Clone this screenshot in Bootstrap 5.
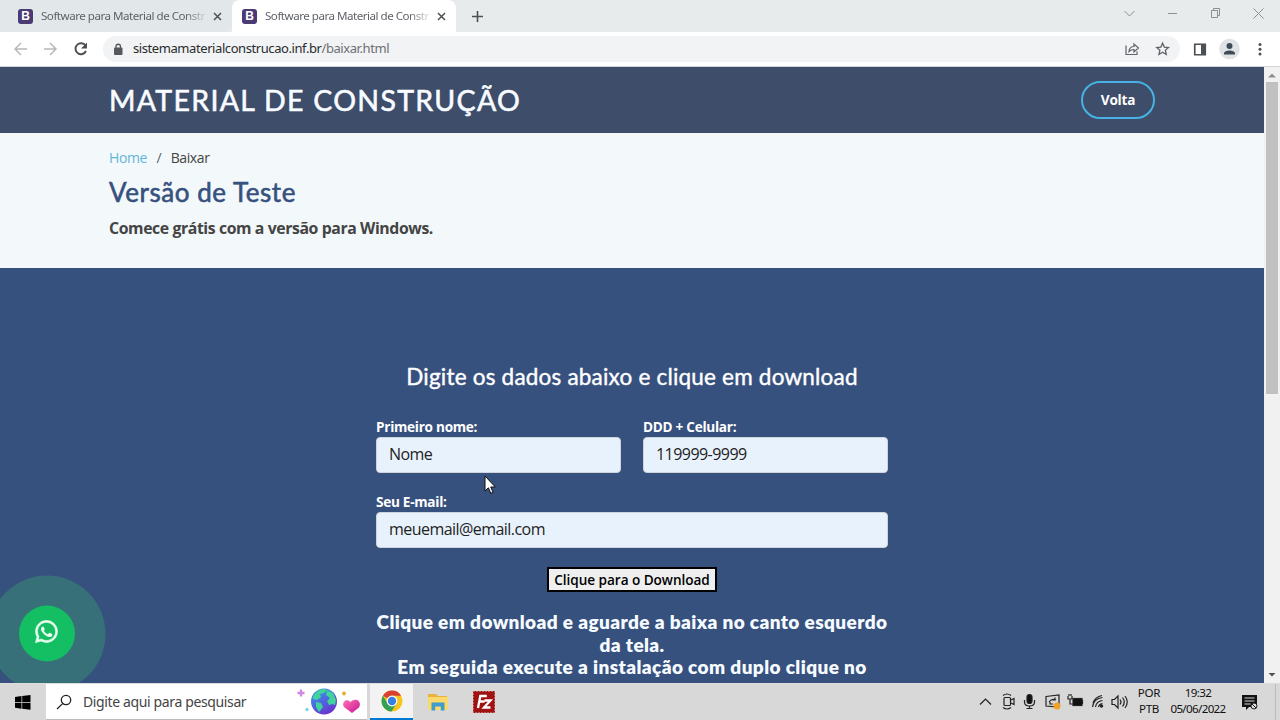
<!DOCTYPE html>
<html lang="pt-br">
<head>
<meta charset="utf-8">
<title>Software para Material de Construção</title>
<link href="https://cdn.jsdelivr.net/npm/bootstrap@5.3.0/dist/css/bootstrap.min.css" rel="stylesheet">
<style>
body{width:1280px;height:720px;overflow:hidden;font-family:"Open Sans",sans-serif;font-size:14px;color:#444;background:#fff}
svg{display:block;flex:none}
.tabstrip{height:32px;background:#e7ebec}
.tab-item{width:224px;padding-left:18px;font-size:11.6px;color:#5f6368}
.tab-one{width:232px;background:#e2e7ea;border-bottom-right-radius:7px}
.tab-item.active{background:#fff;border-radius:8px 8px 0 0}
.tab-label{width:164px;margin:0 8px 0 8px;white-space:nowrap;font-family:"Noto Sans",sans-serif;letter-spacing:-.5px;-webkit-mask-image:linear-gradient(90deg,#000 88%,rgba(0,0,0,.15))}
.bs-logo{width:15px;height:15px;border-radius:3px;background:#4b3a74;color:#fff;font:bold 12px/15px "Liberation Sans",sans-serif;text-align:center}
.toolbar{height:35px;border-bottom:1px solid #cfd3d6;padding-left:14px}
.omnibox{width:1077px;height:26px;border-radius:13px;background:#f1f3f4;margin-left:13px;padding:0 10px 0 10px;font-family:"Noto Sans",sans-serif;font-size:13px;color:#2a2c2e;letter-spacing:-.42px}
.page-view{height:616px;overflow:hidden}
.site-header{height:66px;background:#3d4d6a;padding:0 109px}
.brand{font-family:Lato,sans-serif;-webkit-text-stroke:.6px #f8fbff;font-size:28.5px;letter-spacing:1.3px;line-height:66px;color:#f8fbff}
.btn-volta{width:74px;height:38px;border:2px solid #47b2e4;border-radius:19px;color:#fff;font-weight:700;font-size:13.6px;letter-spacing:-.25px;padding:0;line-height:34px}
.btn-volta:hover{color:#fff}
.crumbs{height:135px;background:#f3f8fb;padding:14px 109px 0}
.crumbs .breadcrumb{font-size:14px;line-height:21px;letter-spacing:-.4px;--bs-breadcrumb-item-padding-x:9.5px}
.crumbs a{color:#64b5dc}
.crumbs .active{color:#444}
.crumbs h2{font-family:Lato,sans-serif;-webkit-text-stroke:.6px #37517e;font-weight:400;font-size:26px;letter-spacing:.55px;line-height:34px;color:#37517e;margin:7px 0 8px}
.crumbs b{font-size:15.8px;letter-spacing:-.4px;line-height:22px;display:block}
.cta{height:415px;background:#37517e;padding-top:94px;color:#fff}
.form-wrap{width:512px;margin:0 auto}
.cta h3{font-family:Lato,sans-serif;font-weight:400;-webkit-text-stroke:.4px #fff;font-size:22.5px;letter-spacing:.2px;line-height:30px;margin:0 0 25px;white-space:nowrap}
.cta label{display:block;font-size:13.6px;letter-spacing:-.28px;font-weight:700;line-height:20px;height:20px}
.cta .form-control{height:36px;background:#e8f2fd;border-color:#ced4da;border-radius:4px;font-size:16px;letter-spacing:-.55px;color:#222;padding:0 11px 2px 12px;width:100%}
.btn-down{width:170px;height:25px;background:#efefef;border:2px solid #000;font-size:13.6px;letter-spacing:-.05px;font-weight:600;color:#000;padding:0;line-height:21px}
.note{font-family:Lato,sans-serif;font-weight:800;font-size:19px;letter-spacing:.39px;line-height:22.6px;white-space:nowrap;color:#f6fbff}
.scroll-rail{width:16px;background:#f1f1f1}
.scroll-thumb{width:12px;height:312px;background:#c1c1c1}
.taskbar{height:37px;background:#d8d8d8;border-top:1px solid #ddd;color:#111}
.start{width:46px}
.search{width:321px;background:#fff;border-bottom:1px solid #bbb;font-family:"Noto Sans",sans-serif;font-size:14px;letter-spacing:-.37px;color:#444}
.app{width:46px}
.app-on{width:43px;background:#f3f3f3;border-bottom:2px solid #0078d4;margin-left:3px}
.tray{font-family:"Noto Sans",sans-serif;font-size:11.6px;letter-spacing:-.65px;line-height:15.5px;text-align:center}
.wa{left:-12px;top:575px;width:118px;height:108px;overflow:hidden}
.cursor-arrow{left:484px;top:475px}
</style>
<script src="https://cdn.jsdelivr.net/npm/bootstrap@5.3.0/dist/js/bootstrap.bundle.min.js"></script>
</head>
<body class="d-flex flex-column position-relative">
<div class="tabstrip d-flex">
  <div class="tab-item tab-one d-flex align-items-center"><span class="bs-logo">B</span><span class="tab-label">Software para Material de Constr</span><svg width="9" height="9" viewBox="0 0 9 9"><path d="M1 1l7 7M8 1L1 8" stroke="#4c5054" stroke-width="1.5"/></svg></div>
  <div class="tab-item active d-flex align-items-center ps-0"><span class="bs-logo" style="margin-left:10px">B</span><span class="tab-label">Software para Material de Constr</span><svg width="9" height="9" viewBox="0 0 9 9"><path d="M1 1l7 7M8 1L1 8" stroke="#4c5054" stroke-width="1.5"/></svg></div>
  <svg class="ms-3 align-self-center" width="11" height="11" viewBox="0 0 11 11"><path d="M5.500 0v11M0 5.500h11" stroke="#4c5054" stroke-width="1.6"/></svg>
  <svg class="ms-auto" width="160" height="32" fill="none" stroke="#8b9091"><path d="M4.500 11l5 5 5-5M48 13.500h9"/><path d="M91.500 10.500h6v7h-6zM93.500 10.500v-2h6v7h-2M133.500 8.500l10 10M143.500 8.500l-10 10"/></svg>
</div>
<div class="toolbar d-flex align-items-center">
  <svg width="76" height="16" viewBox="0 0 76 16" fill="none" stroke-width="1.5"><path d="M13 8H1M7 2L1 8l6 6M30 8h12M36 2l6 6-6 6" stroke="#b5b8ba"/><path d="M71.500 4.500A5.500 5.500 0 1 0 72 10" stroke="#4c5054" stroke-width="1.900"/><path d="M73 1.500v6h-6z" fill="#4c5054"/></svg>
  <div class="omnibox d-flex align-items-center">
    <svg width="11" height="13" viewBox="0 0 11 13"><rect x="1" y="4.500" width="8.500" height="7.500" rx="1" fill="#55595d"/><path d="M3 5V3.500a2.250 2.250 0 0 1 4.500 0V5" fill="none" stroke="#55595d" stroke-width="1.300"/></svg>
    <span style="margin-left:9px">sistemamaterialconstrucao.inf.br<span style="color:#6c7074">/baixar.html</span></span>
    <svg class="ms-auto" width="46" height="16" viewBox="0 0 46 16" fill="none" stroke="#5f6368" stroke-width="1.200"><path d="M2 4.500v9h11v-3M5 10.500c.3-3.300 2-5 5-5V3l4.500 4-4.500 4V8.500c-2 0-3.500.5-5 2z"/><path d="M38.600 2.200l1.750 3.900 4.100.4-3.100 2.800.9 4.200-3.650-2.200-3.650 2.200.9-4.200-3.100-2.800 4.100-.4z" stroke-width="1.300"/></svg>
  </div>
  <svg width="86" height="26" viewBox="0 0 86 26"><path d="M14.750 8.250h10.500v10.500h-10.500z" fill="none" stroke="#4c4f53" stroke-width="1.700"/><path d="M21 8h5v11h-5z" fill="#4c4f53"/><circle cx="49.500" cy="13" r="10.300" fill="#dfe3e6"/><circle cx="49.500" cy="10" r="3" fill="#3f4a57"/><path d="M44 18.500v-1c0-4 11-4 11 0v1z" fill="#3f4a57"/><g fill="#4c5054"><circle cx="80" cy="8.500" r="1.500"/><circle cx="80" cy="13.300" r="1.500"/><circle cx="80" cy="18.100" r="1.500"/></g></svg>
</div>
<div class="page-view d-flex">
  <main class="flex-grow-1">
    <header class="site-header d-flex align-items-center justify-content-between"><span class="brand">MATERIAL DE CONSTRUÇÃO</span><a class="btn btn-volta">Volta</a></header>
    <section class="crumbs">
      <ol class="breadcrumb mb-0"><li class="breadcrumb-item"><a class="text-decoration-none">Home</a></li><li class="breadcrumb-item active">Baixar</li></ol>
      <h2>Versão de Teste</h2><b>Comece grátis com a versão para Windows.</b>
    </section>
    <section class="cta">
      <div class="form-wrap">
        <h3 class="d-flex justify-content-center">Digite os dados abaixo e clique em download</h3>
        <div class="row gx-0" style="gap:0 22px">
          <div class="col"><label>Primeiro nome:</label><input class="form-control" value="Nome"></div>
          <div class="col"><label>DDD + Celular:</label><input class="form-control" value="119999-9999"></div>
        </div>
        <label style="margin-top:19px">Seu E-mail:</label><input class="form-control" value="meuemail@email.com">
        <div class="d-flex justify-content-center" style="margin:19px 0"><button class="btn btn-down rounded-0">Clique para o Download</button></div>
        <div class="note text-center"><div>Clique em download e aguarde a baixa no canto esquerdo</div><div>da tela.</div><div>Em seguida execute a instalação com duplo clique no</div></div>
      </div>
    </section>
  </main>
  <div class="scroll-rail d-flex flex-column align-items-center">
    <svg width="16" height="15"><path d="M4 10.500l4-4 4 4z" fill="#8f8f8f"/></svg>
    <div class="scroll-thumb"></div>
    <svg class="mt-auto" width="16" height="16"><path d="M4.500 6l3.500 3.500L11.500 6z" fill="#505050"/></svg>
  </div>
</div>
<footer class="taskbar d-flex">
  <div class="start d-flex align-items-center"><svg style="margin-left:15px" width="16" height="15" viewBox="0 0 16 15"><path d="M0 2l6.500-1v6H0zM7.200.9L15.500 0v7H7.200zM0 7.700h6.500v6L0 12.800zM7.200 7.700h8.300v7.100l-8.300-1z" fill="#000"/></svg></div>
  <div class="search d-flex align-items-center">
    <svg style="margin-left:10px" width="16" height="16" viewBox="0 0 16 16" fill="none" stroke="#222" stroke-width="1.300"><circle cx="10" cy="6" r="4.700"/><path d="M6.600 9.600L1 15"/></svg>
    <span style="margin-left:11px">Digite aqui para pesquisar</span>
    <svg class="ms-auto" style="margin-right:5px" width="66" height="34" viewBox="0 0 66 34">
      <defs><linearGradient id="gl" x2=".6" y2="1"><stop stop-color="#2ba8ef"/><stop offset="1" stop-color="#6a35cf"/></linearGradient><linearGradient id="ht" x2="1" y2="1"><stop stop-color="#ff72b4"/><stop offset="1" stop-color="#c91593"/></linearGradient></defs>
      <path d="M5 4.500v7M1.500 8h7" stroke="#cf86e3" stroke-width="2.300"/><circle cx="11" cy="24.500" r="1.700" fill="#7bd4e6"/><circle cx="48" cy="8.500" r="1.900" fill="#e5ae35"/>
      <circle cx="28" cy="16.500" r="13" fill="url(#gl)"/><path d="M17 12q4-8 11-8l3 1-3 3-4 1 1 3-4 3-4-1zM20 17l5 1 2 4-4 5-3-5zM31 5l6 3 3 7-1 5-3-1-3 1-2-4 3-3-4-3z" fill="#42d39b"/>
      <path d="M56 28L48 22c-3-5 2.500-9.500 6.500-5C59.500 11.500 66.500 16.500 63 22.500z" fill="url(#ht)"/>
    </svg>
  </div>
  <div class="app-on d-flex align-items-center justify-content-center"><svg width="22" height="22" viewBox="0 0 22 22"><circle cx="11" cy="11" r="10.500" fill="#f8c51d"/><path d="M11 11L1.900 5.750A10.500 10.500 0 0 1 20.100 5.750H11z" fill="#d9412f"/><path d="M11 11L6.700 13.500 1.900 5.750A10.500 10.500 0 0 0 10.500 21.500L15.600 13.500z" fill="#35a052"/><circle cx="11" cy="11" r="5.400" fill="#fff"/><circle cx="11" cy="11" r="4.200" fill="#377fe0"/></svg></div>
  <div class="app d-flex align-items-center justify-content-center" style="margin-left:2px"><svg width="20" height="18" viewBox="0 0 20 18"><path d="M0 1h8l2 2h9v14H0z" fill="#e7b23e"/><path d="M0 4h20v13H0z" fill="#fbd96b"/><path d="M3.500 17.500V9.500h13v8h-3.700v-4H7.200v4z" fill="#3f9ccb"/></svg></div>
  <div class="app d-flex align-items-center justify-content-center"><svg width="22" height="22" viewBox="0 0 22 22"><rect width="22" height="22" fill="#a01212"/><rect x=".5" y=".5" width="21" height="21" fill="none" stroke="#d9b0b0" stroke-dasharray="1 2"/><path d="M5 17L7.300 5h6.500M6.500 10.500h5M11.500 9.500h6l-6.500 7h6.500" fill="none" stroke="#fff" stroke-width="2.300"/></svg></div>
  <div class="tray d-flex ms-auto">
    <svg width="152" height="36" viewBox="0 0 152 36" fill="none" stroke="#222" stroke-width="1.200"><path d="M1 20.500l5.500-5.500 5.500 5.500"/><rect x="25" y="13.500" width="6.500" height="8" rx="1"/><path d="M32 16l3-1.500v6L32 19M24 11.500q4-3 8 0M24 23.500q4 3 8 0"/><rect x="48" y="10.500" width="5" height="9" rx="2.500" fill="#111"/><path d="M45.500 16v2q0 4 5 4t5-4v-2M50.500 22v3M47.500 24.500h6"/><path d="M67 12.500l13-1.500v12l-13-1zM70 18q3-4 7-2M76 13.500v2.500h-2.500M71 18v2h3"/><circle cx="78" cy="22" r="3.500" fill="#f0a128" stroke="none"/><rect x="94" y="14.500" width="9" height="7" fill="#111"/><path d="M103.500 16v4M89 12v3h4v-3M90 10v2M92 10v2M91 15v5h3"/><path d="M113.500 23q1-8.500 10-9.500M116.500 23q.5-5.500 7-6.500M119.500 23q.5-3 4-3.500M114 19q2-6 9-7.500"/><circle cx="122.500" cy="22" r="1.100" fill="#222"/><path d="M133 15.500h2.500l3.500-3.500v12l-3.500-3.500H133zM141 15.500q2 2.500 0 5M143.500 13.500q3.500 4.500 0 9M146 12q4.500 6 0 12"/></svg>
    <div style="width:38px;margin-left:-1px;padding-top:1px;letter-spacing:-.3px">POR<br>PTB</div>
    <div style="width:60px;padding-top:1px;white-space:nowrap">19:32<br>05/06/2022</div>
    <svg width="52" height="36" viewBox="0 0 52 36"><path d="M14 11h15v12H21l-3 3v-3h-4z" fill="#111"/><path d="M16.500 14h10M16.500 17h10M16.500 20h6" stroke="#d8d8d8" stroke-width="1.200"/><circle cx="26" cy="22" r="3" fill="#ddd" stroke="#222"/><path d="M24 20l4 4" stroke="#222"/><path d="M47.500 0v36" stroke="#bbb"/></svg>
  </div>
</footer>
<div class="wa position-absolute"><svg width="118" height="118" viewBox="0 0 118 118"><circle cx="59" cy="59" r="58.500" fill="#377079"/><circle cx="59" cy="58.500" r="28" fill="#14bf63"/><g transform="translate(47.500 45.500) scale(1.380)" fill="#eafff1"><path d="M13.600 2.300A7.850 7.850 0 0 0 8 0C3.600 0 .070 3.560.070 7.930c0 1.400.360 2.760 1.060 3.960L0 16l4.200-1.100a7.900 7.900 0 0 0 3.790.960c4.370 0 7.930-3.560 7.930-7.930A7.900 7.900 0 0 0 13.600 2.300zM8 14.520a6.600 6.600 0 0 1-3.360-.920l-.240-.140-2.490.650.660-2.430-.160-.250a6.560 6.560 0 0 1-1-3.500C1.410 4.290 4.370 1.340 8 1.340a6.560 6.560 0 0 1 4.660 1.930 6.560 6.560 0 0 1 1.930 4.660C14.590 11.570 11.560 14.520 8 14.520z" stroke="#eafff1" stroke-width=".5"/><path d="M11.610 9.590c-.2-.1-1.170-.580-1.350-.640-.180-.070-.310-.1-.440.100-.130.200-.510.640-.630.770-.110.130-.230.150-.430.050-.2-.1-.840-.310-1.590-.980-.590-.530-.990-1.180-1.100-1.380-.110-.2-.010-.3.090-.4.300-.3.600-.6.500-.840-.050-.1-.450-1.080-.610-1.470-.160-.390-.320-.340-.440-.340-.110-.010-.250-.010-.380-.010a.730.730 0 0 0-.530.250c-.180.200-.690.680-.690 1.650 0 .980.710 1.920.810 2.050.100.130 1.400 2.130 3.390 2.990 1.760.730 2.120.580 2.500.550.380-.040 1.170-.480 1.340-.940.160-.460.160-.860.110-.940-.050-.090-.180-.130-.380-.230z"/></g></svg></div>
<svg class="cursor-arrow position-absolute" width="12" height="20" viewBox="0 0 12 20"><path d="M1 1v15l3.400-3.200 2.400 5.500 2.300-1-2.400-5.300h4.600z" fill="#fff" stroke="#111"/></svg>
</body>
</html>
